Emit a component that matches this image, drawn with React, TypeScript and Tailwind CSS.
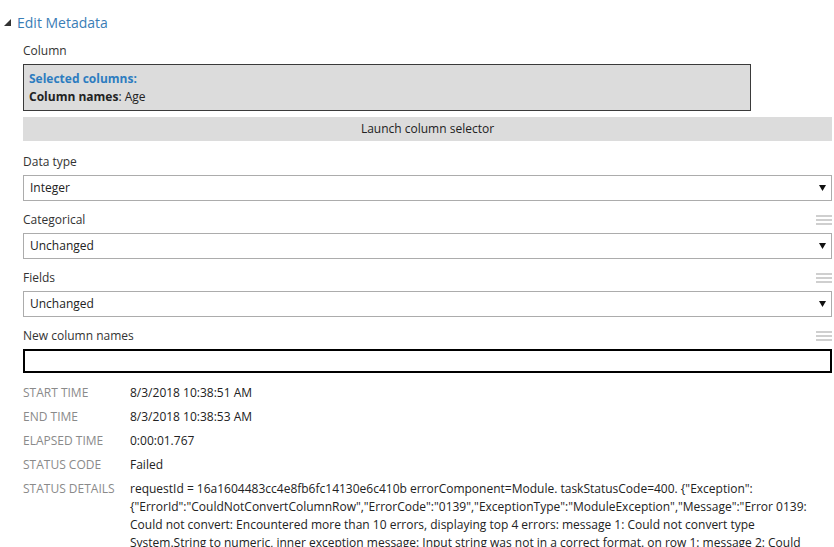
import React from "react";

const font = { fontFamily: '"Open Sans", "Noto Sans", sans-serif' };

function Hamburger() {
  return (
    <div className="flex flex-col gap-[2px] w-[16px]">
      <div className="h-[2px] bg-[#cfcfcf]" />
      <div className="h-[2px] bg-[#cfcfcf]" />
      <div className="h-[2px] bg-[#cfcfcf]" />
    </div>
  );
}

function Label({ text, menu }: { text: string; menu?: boolean }) {
  return (
    <div className="flex h-[18px] items-center justify-between text-[12px] text-[#333]">
      <span>{text}</span>
      {menu && <Hamburger />}
    </div>
  );
}

function Select({ value }: { value: string }) {
  return (
    <div className="mt-[4px] flex h-[26px] items-center justify-between border border-[#acacac] bg-white pl-[6px] pr-[5px] text-[12px] text-[#222]">
      <span>{value}</span>
      <svg width="7" height="6" viewBox="0 0 7 6">
        <polygon points="0,0 7,0 3.5,6" fill="#111" />
      </svg>
    </div>
  );
}

function Row({ label, value }: { label: string; value: React.ReactNode }) {
  return (
    <div className="flex py-[3px] text-[12px] leading-[18px]">
      <div className="w-[107px] shrink-0 text-[#8a8a8a]">{label}</div>
      <div className="text-[#222]">{value}</div>
    </div>
  );
}

export default function App() {
  const details = [
    'requestId = 16a1604483cc4e8fb6fc14130e6c410b errorComponent=Module. taskStatusCode=400. {"Exception":',
    '{"ErrorId":"CouldNotConvertColumnRow","ErrorCode":"0139","ExceptionType":"ModuleException","Message":"Error 0139:',
    "Could not convert: Encountered more than 10 errors, displaying top 4 errors: message 1: Could not convert type",
    "System.String to numeric, inner exception message: Input string was not in a correct format. on row 1: message 2: Could",
  ];
  return (
    <div className="h-[547px] w-[834px] overflow-hidden bg-white" style={font}>
      <div className="mt-[13px] flex h-[18px] items-center pl-[4px]">
        <svg width="7" height="7" viewBox="0 0 7 7" className="mt-[1px]">
          <polygon points="7,0 7,7 0,7" fill="#333" />
        </svg>
        <span className="ml-[6px] text-[14px] text-[#3a7db6]">Edit Metadata</span>
      </div>
      <div className="pl-[23px] pr-[2px]">
        <div className="mt-[11px]">
          <Label text="Column" />
        </div>
        <div className="mt-[4px] w-[728px] border border-[#3a3a3a] bg-[#dcdcdc] px-[5px] pb-[4px] pt-[5px] text-[12px] leading-[18px]">
          <div className="font-bold text-[#2d7cc0]">Selected columns:</div>
          <div className="text-[#222]">
            <span className="font-bold">Column names</span>: Age
          </div>
        </div>
        <div className="mt-[6px] flex h-[24px] items-center justify-center bg-[#dcdcdc] text-[12px] text-[#222]">
          Launch column selector
        </div>
        <div className="mt-[12px]">
          <Label text="Data type" />
        </div>
        <Select value="Integer" />
        <div className="mt-[10px]">
          <Label text="Categorical" menu />
        </div>
        <Select value="Unchanged" />
        <div className="mt-[10px]">
          <Label text="Fields" menu />
        </div>
        <Select value="Unchanged" />
        <div className="mt-[10px]">
          <Label text="New column names" menu />
        </div>
        <div className="mt-[4px] h-[24px] border-2 border-black bg-white" />
        <div className="mt-[8px]">
          <Row label="START TIME" value="8/3/2018 10:38:51 AM" />
          <Row label="END TIME" value="8/3/2018 10:38:53 AM" />
          <Row label="ELAPSED TIME" value="0:00:01.767" />
          <Row label="STATUS CODE" value="Failed" />
          <Row
            label="STATUS DETAILS"
            value={
              <div>
                {details.map((d, i) => (
                  <div key={i} className="whitespace-nowrap">
                    {d}
                  </div>
                ))}
              </div>
            }
          />
        </div>
      </div>
    </div>
  );
}
